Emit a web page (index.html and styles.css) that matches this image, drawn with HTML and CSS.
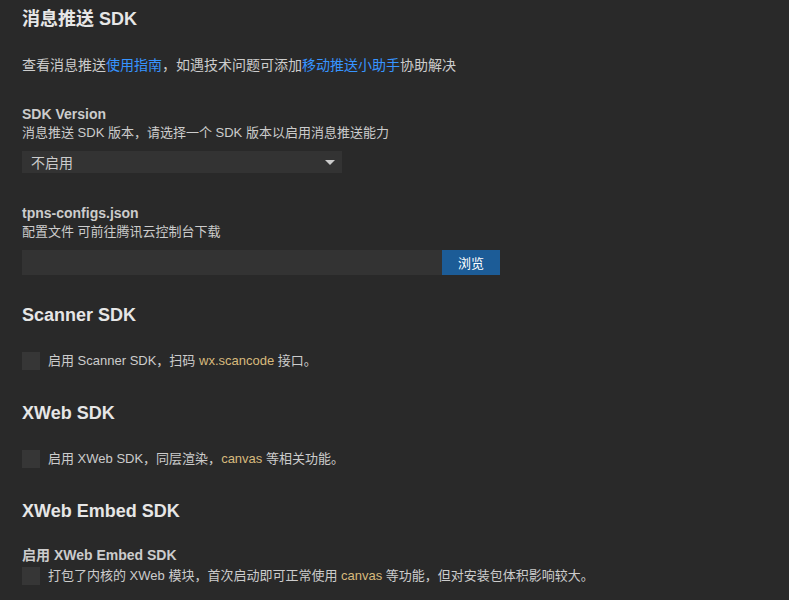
FILE: index.html
```html
<!doctype html>
<html lang="zh-CN">
  <head>
    <meta charset="UTF-8" />
    <meta name="viewport" content="width=device-width, initial-scale=1.0" />
    <title>SDK 设置</title>
    <link rel="stylesheet" href="styles.css">
  </head>
  <body>
    <section class="section first">
      <h2 class="title">消息推送 SDK</h2>
      <p class="intro">查看消息推送<a href="#">使用指南</a>，如遇技术问题可添加<a href="#">移动推送小助手</a>协助解决</p>

      <div class="field">
        <div class="label">SDK Version</div>
        <div class="hint">消息推送 SDK 版本，请选择一个 SDK 版本以启用消息推送能力</div>
        <div class="select">
          <span>不启用</span>
          <span class="arrow"></span>
        </div>
      </div>

      <div class="field">
        <div class="label">tpns-configs.json</div>
        <div class="hint">配置文件 可前往腾讯云控制台下载</div>
        <div class="file-row">
          <input type="text" class="file-input" />
          <button class="browse">浏览</button>
        </div>
      </div>
    </section>

    <section class="section">
      <h2 class="title">Scanner SDK</h2>
      <label class="check">
        <span class="box"></span>
        <span>启用 Scanner SDK，扫码 <code>wx.scancode</code> 接口。</span>
      </label>
    </section>

    <section class="section">
      <h2 class="title">XWeb SDK</h2>
      <label class="check">
        <span class="box"></span>
        <span>启用 XWeb SDK，同层渲染，<code>canvas</code> 等相关功能。</span>
      </label>
    </section>

    <section class="section">
      <h2 class="title">XWeb Embed SDK</h2>
      <div class="label embed-label">启用 XWeb Embed SDK</div>
      <label class="check tight">
        <span class="box"></span>
        <span>打包了内核的 XWeb 模块，首次启动即可正常使用 <code>canvas</code> 等功能，但对安装包体积影响较大。</span>
      </label>
    </section>
  </body>
</html>
```

FILE: styles.css
```css
body {
  margin: 0;
  padding: 7px 22px 0;
  background-color: #292929;
  color: #cccccc;
  font-family: "Liberation Sans", "Noto Sans CJK SC", sans-serif;
  font-size: 13px;
  overflow: hidden;
}
.section {
  margin-top: 30px;
}
.section.first {
  margin-top: 0;
}
.first + .section {
  margin-top: 28px;
}
.title {
  margin: 0;
  font-size: 18px;
  line-height: 24px;
  font-weight: bold;
  color: #e6e6e6;
}
.intro {
  margin: 24px 0 0;
  font-size: 14px;
  line-height: 20px;
}
.intro a {
  color: #3794ff;
  text-decoration: none;
}
.field {
  margin-top: 30px;
}
.field + .field {
  margin-top: 31px;
}
.label {
  font-size: 14px;
  line-height: 18px;
  font-weight: bold;
  color: #cccccc;
}
.hint {
  line-height: 19px;
}
.select {
  display: flex;
  align-items: center;
  justify-content: space-between;
  width: 320px;
  height: 22px;
  margin-top: 9px;
  padding: 0 6px 0 9px;
  box-sizing: border-box;
  background-color: #333333;
  font-size: 14px;
  color: #cccccc;
}
.arrow {
  width: 0;
  height: 0;
  margin-right: 1px;
  border-left: 5px solid transparent;
  border-right: 5px solid transparent;
  border-top: 5px solid #cccccc;
}
.file-row {
  display: flex;
  margin-top: 9px;
  height: 25px;
}
.file-input {
  width: 420px;
  margin: 0;
  border: none;
  padding: 0 8px;
  box-sizing: border-box;
  background-color: #333333;
  color: #cccccc;
  outline: none;
}
.browse {
  width: 58px;
  margin: 0;
  border: none;
  padding: 0;
  background-color: #1c5c97;
  color: #ffffff;
  font-family: "Liberation Sans", "Noto Sans CJK SC", sans-serif;
  font-size: 13px;
  cursor: pointer;
}
.check {
  display: flex;
  align-items: center;
  gap: 8px;
  height: 20px;
  margin-top: 24px;
  line-height: 20px;
}
.check.tight {
  margin-top: 1px;
}
.box {
  width: 18px;
  height: 18px;
  background-color: #363636;
  flex-shrink: 0;
}
.embed-label {
  margin-top: 22px;
  line-height: 20px;
}
code {
  font-family: "Liberation Sans", "Noto Sans CJK SC", sans-serif;
  color: #d7ba7d;
}
```
